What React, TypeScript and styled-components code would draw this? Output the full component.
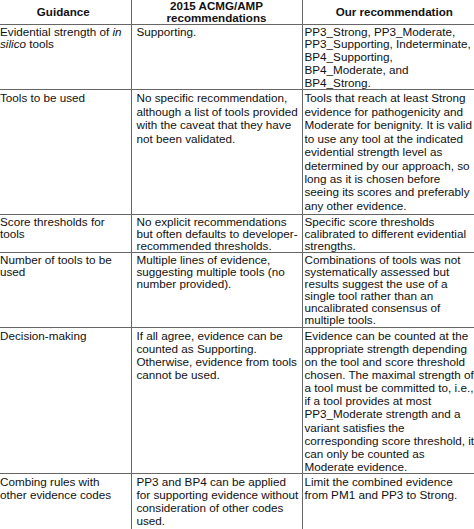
import React from 'react'
import styled, { createGlobalStyle } from 'styled-components'

const GlobalStyle = createGlobalStyle`
  html, body {
    margin: 0;
    padding: 0;
    background: #fff;
    overflow: hidden;
  }
  body {
    width: 474px;
    height: 529px;
    font-family: 'Liberation Sans', Arial, sans-serif;
    color: #111;
  }
`

const Table = styled.table`
  border-collapse: collapse;
  table-layout: fixed;
  margin-left: -4px;
  width: 490px;
  font-size: 11.7px;
`

const Col = styled.col<{ $w: number }>`
  width: ${(p) => p.$w}px;
`

const HeadRow = styled.tr`
  height: 24px;
`

const HeadCell = styled.th`
  font-weight: bold;
  font-size: 11.6px;
  text-align: center;
  vertical-align: middle;
  padding: 0 3px;
  line-height: 11.5px;
  border-left: 1px solid #666;
  border-bottom: 1px solid #666;
  &:first-child {
    border-left: none;
  }
`

const Row = styled.tr<{ $h: number; $lh: number }>`
  height: ${(p) => p.$h}px;
  line-height: ${(p) => p.$lh}px;
`

const Cell = styled.td<{ $pad: number }>`
  vertical-align: top;
  padding: 1px 0 0 ${(p) => p.$pad}px;
  white-space: nowrap;
  border-left: 1px solid #666;
  border-bottom: 1px solid #666;
  &:first-child {
    border-left: none;
  }
`

type Line = React.ReactNode

const rows: { h: number; lh: number; cells: Line[][] }[] = [
  {
    h: 65,
    lh: 12.8,
    cells: [
      [
        <>
          Evidential strength of <i>in</i>
        </>,
        <>
          <i>silico</i> tools
        </>,
      ],
      ['Supporting.'],
      [
        'PP3_Strong, PP3_Moderate,',
        'PP3_Supporting, Indeterminate,',
        'BP4_Supporting,',
        'BP4_Moderate, and',
        'BP4_Strong.',
      ],
    ],
  },
  {
    h: 125,
    lh: 13.4,
    cells: [
      ['Tools to be used'],
      [
        'No specific recommendation,',
        'although a list of tools provided',
        'with the caveat that they have',
        'not been validated.',
      ],
      [
        'Tools that reach at least Strong',
        'evidence for pathogenicity and',
        'Moderate for benignity. It is valid',
        'to use any tool at the indicated',
        'evidential strength level as',
        'determined by our approach, so',
        'long as it is chosen before',
        'seeing its scores and preferably',
        'any other evidence.',
      ],
    ],
  },
  {
    h: 37,
    lh: 11.8,
    cells: [
      ['Score thresholds for', 'tools'],
      [
        'No explicit recommendations',
        'but often defaults to developer-',
        'recommended thresholds.',
      ],
      ['Specific score thresholds', 'calibrated to different evidential', 'strengths.'],
    ],
  },
  {
    h: 75,
    lh: 12.1,
    cells: [
      ['Number of tools to be', 'used'],
      ['Multiple lines of evidence,', 'suggesting multiple tools (no', 'number provided).'],
      [
        'Combinations of tools was not',
        'systematically assessed but',
        'results suggest the use of a',
        'single tool rather than an',
        'uncalibrated consensus of',
        'multiple tools.',
      ],
    ],
  },
  {
    h: 146,
    lh: 13.1,
    cells: [
      ['Decision-making'],
      [
        'If all agree, evidence can be',
        'counted as Supporting.',
        'Otherwise, evidence from tools',
        'cannot be used.',
      ],
      [
        'Evidence can be counted at the',
        'appropriate strength depending',
        'on the tool and score threshold',
        'chosen. The maximal strength of',
        'a tool must be committed to, i.e.,',
        'if a tool provides at most',
        'PP3_Moderate strength and a',
        'variant satisfies the',
        'corresponding score threshold, it',
        'can only be counted as',
        'Moderate evidence.',
      ],
    ],
  },
  {
    h: 70,
    lh: 13,
    cells: [
      ['Combing rules with', 'other evidence codes'],
      [
        'PP3 and BP4 can be applied',
        'for supporting evidence without',
        'consideration of other codes',
        'used.',
      ],
      ['Limit the combined evidence', 'from PM1 and PP3 to Strong.'],
    ],
  },
]

const pads = [4, 5, 2]

const renderLines = (lines: Line[]) =>
  lines.map((l, i) => (
    <React.Fragment key={i}>
      {i > 0 && <br />}
      {l}
    </React.Fragment>
  ))

const App = () => (
  <>
    <GlobalStyle />
    <Table>
      <colgroup>
        <Col $w={135} />
        <Col $w={171} />
        <Col $w={184} />
      </colgroup>
      <thead>
        <HeadRow>
          <HeadCell>Guidance</HeadCell>
          <HeadCell>
            2015 ACMG/AMP
            <br />
            recommendations
          </HeadCell>
          <HeadCell>Our recommendation</HeadCell>
        </HeadRow>
      </thead>
      <tbody>
        {rows.map((r, i) => (
          <Row key={i} $h={r.h} $lh={r.lh}>
            {r.cells.map((c, j) => (
              <Cell key={j} $pad={pads[j]}>
                {renderLines(c)}
              </Cell>
            ))}
          </Row>
        ))}
      </tbody>
    </Table>
  </>
)

export default App
